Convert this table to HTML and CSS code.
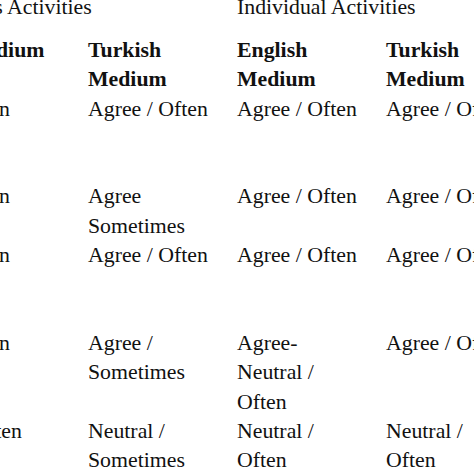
FILE: index.html
```html
<!DOCTYPE html>
<html>
<head>
<meta charset="utf-8">
<link rel="stylesheet" href="styles.css">
</head>
<body>
<div class="sheet">
  <div class="heading">
    <div class="group first">Whole-class Activities</div>
    <div class="group">Individual Activities</div>
  </div>
  <div class="table">
    <div class="row l2 head">
      <div>English Medium</div>
      <div>Turkish<br>Medium</div>
      <div>English<br>Medium</div>
      <div>Turkish<br>Medium</div>
    </div>
    <div class="row l3">
      <div>Agree / Often</div>
      <div>Agree / Often</div>
      <div>Agree / Often</div>
      <div>Agree / Often</div>
    </div>
    <div class="row l2">
      <div>Agree / Often</div>
      <div>Agree<br>Sometimes</div>
      <div>Agree / Often</div>
      <div>Agree / Often</div>
    </div>
    <div class="row l3">
      <div>Agree / Often</div>
      <div>Agree / Often</div>
      <div>Agree / Often</div>
      <div>Agree / Often</div>
    </div>
    <div class="row l3">
      <div>Agree / Often</div>
      <div>Agree /<br>Sometimes</div>
      <div>Agree-<br>Neutral /<br>Often</div>
      <div>Agree / Often</div>
    </div>
    <div class="row l2">
      <div>Neutral / Often</div>
      <div>Neutral /<br>Sometimes</div>
      <div>Neutral /<br>Often</div>
      <div>Neutral /<br>Often</div>
    </div>
  </div>
</div>
</body>
</html>
```
FILE: styles.css
```css
html, body {
  margin: 0;
  padding: 0;
  background: #ffffff;
  width: 474px;
  height: 474px;
  overflow: hidden;
}
.sheet {
  margin-left: -110px;
  margin-top: -7px;
  font-family: "Liberation Serif", "Times New Roman", serif;
  font-size: 21.8px;
  line-height: 29.3px;
  color: #111111;
  white-space: nowrap;
}
.heading {
  display: grid;
  grid-template-columns: 347px 298px;
  height: 43px;
}
.first {
  padding-left: 5px;
}
.row {
  display: grid;
  grid-template-columns: 198px 149px 149px 149px;
}
.l2 { height: 58.6px; }
.l3 { height: 87.9px; }
.head { font-weight: bold; }
```
